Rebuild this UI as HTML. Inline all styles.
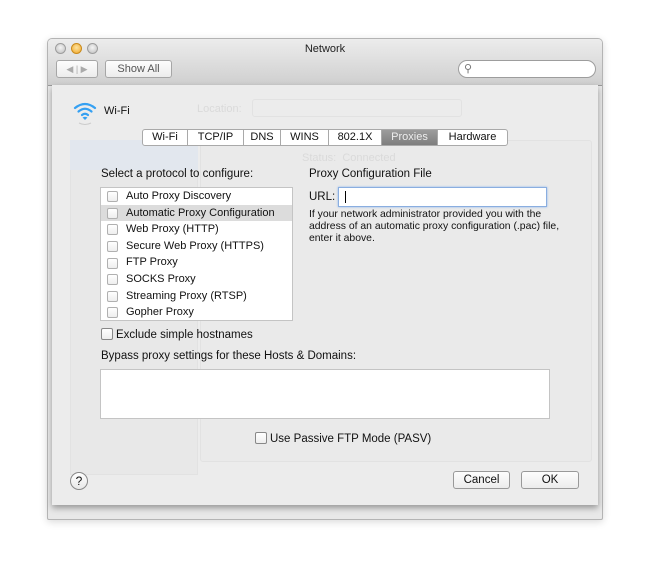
<!DOCTYPE html>
<html><head><style>
*{margin:0;padding:0;box-sizing:border-box}
body{width:650px;height:569px;background:#fff;position:relative;overflow:hidden;font-family:"Liberation Sans",sans-serif;font-size:11px;color:#111}
.a{position:absolute}
.win{left:47px;top:38px;width:556px;height:482px;border:1px solid #b4b4b4;border-radius:5px 5px 2px 2px;background:#e8e8e8;box-shadow:0 2px 8px rgba(0,0,0,.15);overflow:hidden}
.tb{left:0;top:0;width:554px;height:47px;background:linear-gradient(#ececec,#cfcfcf);border-bottom:1px solid #9a9a9a}
.dot{width:11px;height:11px;border-radius:50%;background:radial-gradient(circle at 50% 40%,#f4f4f4,#bdbdbd);border:1px solid #9d9d9d}
.btn{background:linear-gradient(#fdfdfd,#ececec);border:1px solid #a6a6a6;border-radius:3px;text-align:center}
.sheet{left:52px;top:85px;width:546px;height:420px;background:#ececec;box-shadow:0 3px 6px rgba(0,0,0,.35)}
.faded{color:#dadada}
.tab{top:129px;height:17px;border:1px solid #a9a9a9;background:#fff;font-size:11px;line-height:15px;text-align:center}
.cb{width:11px;height:11px;border:1px solid #b0b0b0;border-radius:2px;background:linear-gradient(#fff,#eee)}
.row{left:101px;width:191px;height:16.6px;line-height:17px;padding-left:25px;font-size:11px}
</style></head><body>
<div class="a win">
 <div class="a tb">
  <div class="a dot" style="left:7px;top:4px"></div>
  <div class="a dot" style="left:23px;top:4px;background:radial-gradient(circle at 50% 40%,#fde3a0,#f0a524);border-color:#c98a1c"></div>
  <div class="a dot" style="left:39px;top:4px"></div>
  <div class="a" style="left:0;width:554px;top:4px;text-align:center;font-size:11px;color:#222">Network</div>
  <div class="a btn" style="left:8px;top:21px;width:42px;height:18px;color:#aaa;font-size:9px;line-height:16px">◀ | ▶</div>
  <div class="a btn" style="left:57px;top:21px;width:67px;height:18px;color:#555;font-size:11px;line-height:16px">Show All</div>
  <div class="a" style="left:410px;top:21px;width:138px;height:18px;border:1px solid #9d9d9d;border-radius:9px;background:#fff"><span class="a" style="left:5px;top:1px;color:#777;font-size:11px">&#9906;</span></div>
 </div>
</div>
<div class="a sheet">
 <div class="a faded" style="left:145px;top:18px">Location:</div>
 <div class="a" style="left:200px;top:14px;width:210px;height:18px;border:1px solid #e2e2e2;border-radius:3px"></div>
 <div class="a" style="left:18px;top:55px;width:128px;height:335px;background:#e8e8e8;border:1px solid #e2e2e2"></div>
 <div class="a" style="left:18px;top:55px;width:128px;height:30px;background:#e2e7ee"></div>
 <div class="a" style="left:148px;top:55px;width:392px;height:322px;border:1px solid #e2e2e2;border-radius:3px;background:#eaeaea"></div>
 <div class="a faded" style="left:250px;top:67px">Status: &nbsp;Connected</div>
</div>
<svg class="a" style="left:72px;top:101px" width="28" height="24" viewBox="0 0 28 24"><g fill="none" stroke="#35a0f2" stroke-width="2.2" stroke-linecap="round"><path d="M3 7 Q13 -1 23 7"/><path d="M6.5 10.5 Q13 5 19.5 10.5"/><path d="M10 14 Q13 11.5 16 14"/></g><path d="M13 19 L10.5 16.5 Q13 15 15.5 16.5Z" fill="#35a0f2"/><path d="M7 22 Q13 25 19 22" stroke="#ccc" fill="none"/></svg>
<div class="a" style="left:104px;top:105px;font-size:11px">Wi-Fi</div>
<div class="a tab" style="left:142px;width:46px;border-radius:3px 0 0 3px">Wi-Fi</div>
<div class="a tab" style="left:187px;width:57px">TCP/IP</div>
<div class="a tab" style="left:243px;width:38px">DNS</div>
<div class="a tab" style="left:280px;width:49px">WINS</div>
<div class="a tab" style="left:328px;width:54px">802.1X</div>
<div class="a tab" style="left:381px;width:57px;background:linear-gradient(#9c9c9c,#7e7e7e);color:#eee">Proxies</div>
<div class="a tab" style="left:437px;width:71px;border-radius:0 3px 3px 0">Hardware</div>
<div class="a" style="left:101px;top:168px;font-size:11.5px">Select a protocol to configure:</div>
<div class="a" style="left:100px;top:187px;width:193px;height:134px;border:1px solid #c4c4c4;background:#fff"></div>
<div class="a row" style="top:188px">Auto Proxy Discovery</div>
<div class="a row" style="top:204.6px;background:#dcdcdc">Automatic Proxy Configuration</div>
<div class="a row" style="top:221.2px">Web Proxy (HTTP)</div>
<div class="a row" style="top:237.8px">Secure Web Proxy (HTTPS)</div>
<div class="a row" style="top:254.4px">FTP Proxy</div>
<div class="a row" style="top:271px">SOCKS Proxy</div>
<div class="a row" style="top:287.6px">Streaming Proxy (RTSP)</div>
<div class="a row" style="top:304.2px">Gopher Proxy</div>
<div class="a cb" style="left:107px;top:191px"></div>
<div class="a cb" style="left:107px;top:208px"></div>
<div class="a cb" style="left:107px;top:224px"></div>
<div class="a cb" style="left:107px;top:241px"></div>
<div class="a cb" style="left:107px;top:258px"></div>
<div class="a cb" style="left:107px;top:274px"></div>
<div class="a cb" style="left:107px;top:291px"></div>
<div class="a cb" style="left:107px;top:307px"></div>
<div class="a cb" style="left:101px;top:328px;width:12px;height:12px;border-color:#888"></div>
<div class="a" style="left:116px;top:329px;font-size:11.5px">Exclude simple hostnames</div>
<div class="a" style="left:101px;top:350px;font-size:11.5px">Bypass proxy settings for these Hosts &amp; Domains:</div>
<div class="a" style="left:100px;top:369px;width:450px;height:50px;border:1px solid #c4c4c4;background:#fff"></div>
<div class="a cb" style="left:255px;top:432px;width:12px;height:12px;border-color:#888"></div>
<div class="a" style="left:270px;top:433px;font-size:11.5px">Use Passive FTP Mode (PASV)</div>
<div class="a" style="left:309px;top:168px;font-size:11.5px">Proxy Configuration File</div>
<div class="a" style="left:309px;top:191px;font-size:11.5px">URL:</div>
<div class="a" style="left:338px;top:187px;width:209px;height:20px;border:1px solid #8aaee0;box-shadow:0 0 2px #8ab4ef;background:#fff"><div class="a" style="left:6px;top:3px;width:1px;height:12px;background:#000"></div></div>
<div class="a" style="left:309px;top:209px;font-size:10.4px;line-height:12px;width:260px">If your network administrator provided you with the<br>address of an automatic proxy configuration (.pac) file,<br>enter it above.</div>
<div class="a" style="left:70px;top:472px;width:18px;height:18px;border:1px solid #888;border-radius:50%;background:linear-gradient(#fff,#e8e8e8);text-align:center;font-size:12px;line-height:16px">?</div>
<div class="a btn" style="left:453px;top:471px;width:57px;height:18px;font-size:11.5px;line-height:16px;border-color:#999">Cancel</div>
<div class="a btn" style="left:521px;top:471px;width:58px;height:18px;font-size:11.5px;line-height:16px;border-color:#999">OK</div>
</body></html>
